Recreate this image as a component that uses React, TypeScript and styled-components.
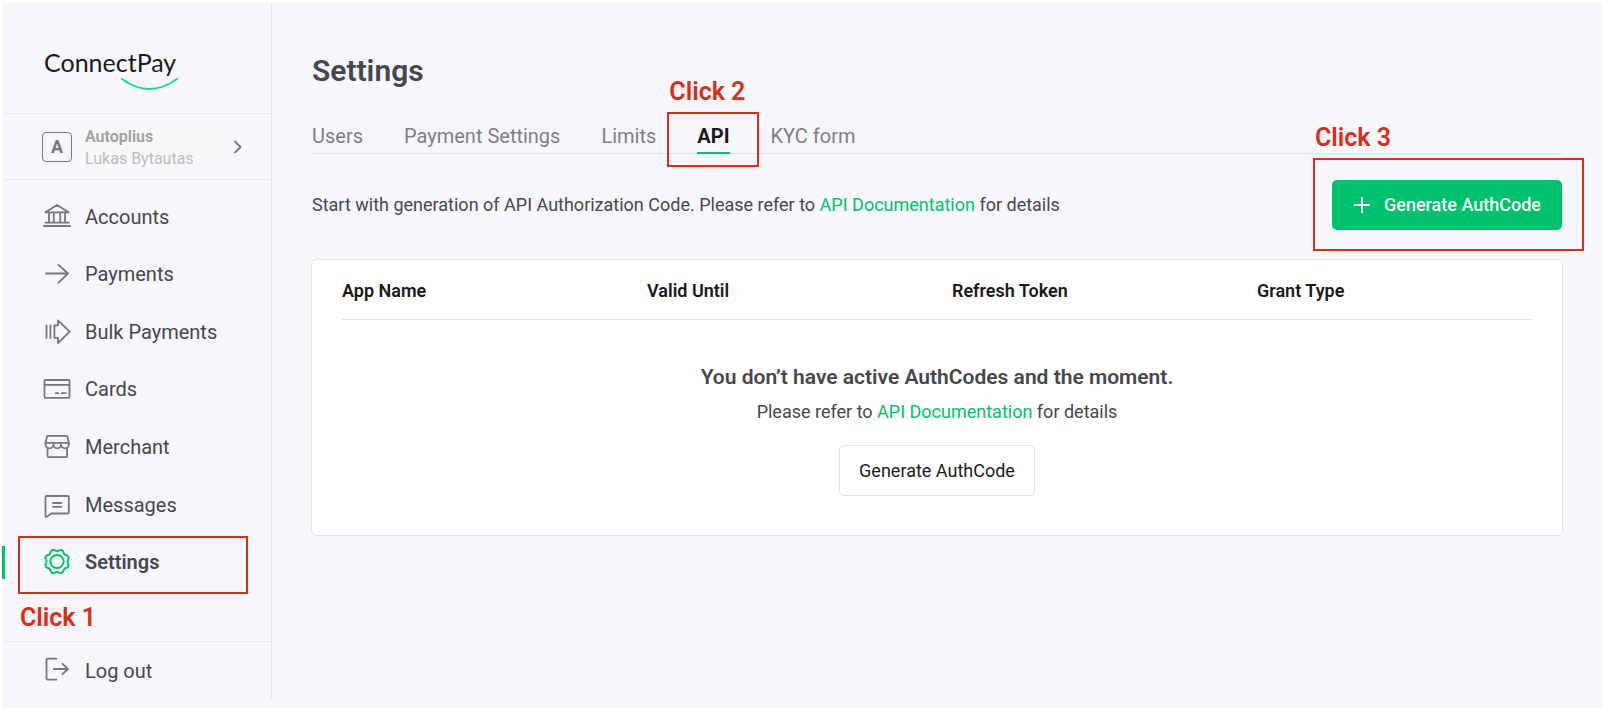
import React from "react";
import styled, { createGlobalStyle, css } from "styled-components";

const color = {
  page: "#f7f6fb",
  line: "#e4e3e8",
  softLine: "#ebeaef",
  text: "#47464c",
  strong: "#1a1a1c",
  muted: "#7f7e84",
  icon: "#77767b",
  green: "#00c16e",
  red: "#d92d1c",
};

const GlobalStyle = createGlobalStyle`
  *, *::before, *::after { box-sizing: border-box; }
  body {
    margin: 0;
    background: #fff;
    color: ${color.text};
    font-family: Roboto, "Liberation Sans", sans-serif;
    font-size: 18px;
    line-height: 24px;
  }
  h1, h2, p, ul { margin: 0; padding: 0; }
  ul { list-style: none; }
  a { color: inherit; text-decoration: none; }
  button { font: inherit; cursor: pointer; }
`;

const Page = styled.div`
  display: flex;
  min-height: 100vh;
  padding: 3px 0 0 2px;
  background: linear-gradient(${color.page}, ${color.page}) content-box;
`;

const Sidebar = styled.aside`
  display: flex;
  flex-direction: column;
  flex: none;
  width: 270px;
  margin-bottom: 9px;
  border-right: 1px solid ${color.line};
`;

const Brand = styled.a`
  display: block;
  height: 111px;
  padding: 42px 0 0 41px;
  border-bottom: 1px solid ${color.softLine};
  color: ${color.strong};
`;

const Account = styled.button`
  display: flex;
  align-items: center;
  height: 66px;
  padding: 0 0 0 40px;
  border: 0;
  border-bottom: 1px solid ${color.softLine};
  background: none;
  text-align: left;
  color: ${color.icon};
`;

const Avatar = styled.span`
  display: grid;
  place-items: center;
  width: 30px;
  height: 30px;
  border: 1px solid ${color.icon};
  border-radius: 4px;
  font-size: 18px;
  font-weight: 700;
`;

const AccountNames = styled.span`
  display: flex;
  flex-direction: column;
  width: 139px;
  margin: 0 12px 0 5px;
  padding: 2px 8px 0;
  background: #f7f7f8;
  font-size: 16px;
  line-height: 22px;
  color: #bcbcbf;
`;

const AccountTitle = styled.strong`
  font-weight: 600;
  color: #a09fa2;
`;

const Nav = styled.nav`
  display: flex;
  flex-direction: column;
  flex: 1;
`;

const NavList = styled.ul`
  display: flex;
  flex-direction: column;
  justify-content: space-between;
  flex: 1;
  padding: 8px 0 50px;
`;

const NavItem = styled.li<{ $active?: boolean }>`
  position: relative;
  ${(p) =>
    p.$active &&
    css`
      font-weight: 600;
      &::before {
        content: "";
        position: absolute;
        left: 0;
        top: 12px;
        width: 3px;
        height: 33px;
        background: ${color.green};
      }
    `}
`;

const NavLink = styled.a`
  display: flex;
  align-items: center;
  gap: 14px;
  height: 57px;
  padding-left: 41px;
  font-size: 20px;
`;

const LogoutBar = styled.div`
  border-top: 1px solid ${color.softLine};
`;

const Main = styled.main`
  flex: 1;
  min-width: 0;
  padding: 50px 39px 40px;
`;

const Title = styled.h1`
  padding-left: 1px;
  font-size: 30px;
  line-height: 36px;
  font-weight: 600;
`;

const Tabs = styled.nav`
  display: flex;
  gap: 41px;
  margin: 35px 1px 0;
  border-bottom: 1px solid ${color.line};
`;

const TabSlot = styled.div`
  position: relative;
`;

const Tab = styled.a<{ $active?: boolean }>`
  display: block;
  height: 30px;
  margin-bottom: -1px;
  border-bottom: 2px solid ${(p) => (p.$active ? color.green : "transparent")};
  font-size: 20px;
  line-height: 24px;
  color: ${(p) => (p.$active ? color.strong : color.muted)};
  font-weight: ${(p) => (p.$active ? 700 : 400)};
`;

const Intro = styled.div`
  display: flex;
  align-items: center;
  justify-content: space-between;
  margin: 26px 1px 0;
`;

const DocLink = styled.a`
  color: ${color.green};
`;

const ButtonSlot = styled.div`
  position: relative;
`;

const PrimaryButton = styled.button`
  display: flex;
  align-items: center;
  gap: 14px;
  height: 50px;
  padding: 0 21px 0 22px;
  border: 0;
  border-radius: 5px;
  background: ${color.green};
  color: #fff;
  font-weight: 500;
`;

const SecondaryButton = styled.button`
  height: 51px;
  padding: 0 19px;
  border: 1px solid ${color.line};
  border-radius: 5px;
  background: #fff;
  color: ${color.strong};
`;

const Card = styled.section`
  margin-top: 29px;
  padding: 0 30px 39px;
  border: 1px solid ${color.line};
  border-radius: 6px;
  background: #fff;
`;

const Table = styled.table`
  display: block;
  thead, tbody { display: block; }
`;

const HeadRow = styled.tr`
  display: grid;
  grid-template-columns: repeat(4, 1fr);
  gap: 30px;
  height: 60px;
  padding-top: 2px;
  align-items: center;
  border-bottom: 1px solid ${color.line};
`;

const HeadCell = styled.th`
  padding: 0;
  text-align: left;
  font-weight: 600;
  color: ${color.strong};
`;

const EmptyRow = styled.tr`
  display: block;
`;

const EmptyCell = styled.td`
  display: flex;
  flex-direction: column;
  align-items: center;
  padding: 45px 0 0;
`;

const EmptyTitle = styled.h2`
  font-size: 21px;
  line-height: 24px;
  font-weight: 600;
`;

const EmptyText = styled.p`
  margin: 11px 0 21px;
`;

const Highlight = styled.span<{ $inset: string }>`
  position: absolute;
  inset: ${(p) => p.$inset};
  border: 2px solid ${color.red};
  pointer-events: none;
`;

const Step = styled.span<{ $below?: boolean }>`
  position: absolute;
  left: 0;
  ${(p) => (p.$below ? "top: 100%;" : "bottom: 100%;")}
  padding: 11px 0 7px;
  font-size: 25px;
  line-height: 30px;
  font-weight: 600;
  white-space: nowrap;
  color: ${color.red};
`;

const IconSvg = styled.svg`
  flex: none;
  fill: none;
  stroke: ${color.icon};
  stroke-width: 1.8;
  stroke-linejoin: round;
  stroke-linecap: round;
`;

const GearSvg = styled(IconSvg)`
  stroke: ${color.green};
  stroke-width: 2;
`;

const Icon = ({ children }: { children: React.ReactNode }) => (
  <IconSvg width="28" height="28" viewBox="0 0 28 28" aria-hidden="true">
    {children}
  </IconSvg>
);

const gearPath = (() => {
  const points: string[] = [];
  for (let i = 0; i <= 160; i++) {
    const a = (i / 160) * Math.PI * 2;
    const r = 11.4 + 0.9 * Math.cos(8 * (a - Math.PI / 8));
    points.push(`${(14 + r * Math.cos(a)).toFixed(2)} ${(13.5 + r * Math.sin(a)).toFixed(2)}`);
  }
  return `M${points.join("L")}Z`;
})();

const icons = {
  accounts: (
    <Icon>
      <path d="M2.5 9.3 14 2l11.7 7.3ZM2.5 19.7h23.3M6 9.5v10M10.8 9.5v10M17.2 9.5v10M22 9.5v10M.9 23h26.2" />
    </Icon>
  ),
  payments: (
    <Icon>
      <path d="M3.2 13.5H25M15.5 4.8l9.5 8.7-9.5 9.2" />
    </Icon>
  ),
  bulk: (
    <Icon>
      <path d="M3.5 7.3v12.6M7.4 7.3v12.6M11.4 7.3H15v-5L26.6 13.7 15 25.2v-5.3h-3.6Z" />
    </Icon>
  ),
  cards: (
    <Icon>
      <rect x="1.5" y="5" width="25" height="17.8" rx="1" />
      <path d="M1.5 9.8h25M12.8 18.2h2.4M18.8 18.2h4" />
    </Icon>
  ),
  merchant: (
    <Icon>
      <path d="M5 2.8h18.4q.8 0 1 .8l1.5 6.200H2.4l1.6-6.200q.2-.8 1-.8ZM4.500 15.500v7.700q0 1 1 1h17.600q1 0 1-1v-7.700" />
      <path d="M2.5 9.8v1.6a3.9 3.9 0 0 0 7.8 0V9.8M10.3 11.4a3.9 3.9 0 0 0 7.8 0V9.8M18 11.4a3.9 3.9 0 0 0 7.8 0V9.8" />
    </Icon>
  ),
  messages: (
    <Icon>
      <path d="M3.5 5h21.3q1 0 1 1v15.5q0 1-1 1H8.2L4 25.6q-1.5.8-1.5-.6V6q0-1 1-1ZM10 12h8.2M10 15.8h8.2" />
    </Icon>
  ),
  settings: (
    <GearSvg width="28" height="28" viewBox="0 0 28 28" aria-hidden="true">
      <path d={gearPath} />
      <circle cx="14" cy="13.5" r="6.6" />
    </GearSvg>
  ),
  logout: (
    <Icon>
      <path d="M13.5 1.6h-9q-1 0-1 1v19q0 1 1 1h9M10.8 12h14.200M19.5 6.8 25 12l-5.5 5.2" />
    </Icon>
  ),
};

const navItems: { label: string; icon: React.ReactNode; active?: boolean }[] = [
  { label: "Accounts", icon: icons.accounts },
  { label: "Payments", icon: icons.payments },
  { label: "Bulk Payments", icon: icons.bulk },
  { label: "Cards", icon: icons.cards },
  { label: "Merchant", icon: icons.merchant },
  { label: "Messages", icon: icons.messages },
  { label: "Settings", icon: icons.settings, active: true },
];

const tabs = ["Users", "Payment Settings", "Limits", "API", "KYC form"];
const columns = ["App Name", "Valid Until", "Refresh Token", "Grant Type"];

const Logo = () => (
  <svg width="150" height="50" viewBox="0 0 150 50" role="img" aria-label="ConnectPay">
    <text x="1" y="27" fontFamily="Lato, sans-serif" fontSize="25" fill={color.strong}>
      ConnectPay
    </text>
    <path d="M79 34q27 20 55 0" fill="none" stroke="#17d98a" strokeWidth="2" strokeLinecap="round" />
  </svg>
);

export default function App() {
  return (
    <>
      <GlobalStyle />
      <Page>
        <Sidebar>
          <Brand href="#">
            <Logo />
          </Brand>
          <Account type="button">
            <Avatar>A</Avatar>
            <AccountNames>
              <AccountTitle>Autoplius</AccountTitle>
              <span>Lukas Bytautas</span>
            </AccountNames>
            <IconSvg width="20" height="20" viewBox="0 0 20 20" aria-hidden="true">
              <path d="m7 4.5 5.5 5.5L7 15.5" />
            </IconSvg>
          </Account>
          <Nav>
            <NavList>
              {navItems.map((item) => (
                <NavItem key={item.label} $active={item.active}>
                  <NavLink href="#" aria-current={item.active ? "page" : undefined}>
                    {item.icon}
                    {item.label}
                  </NavLink>
                  {item.active && (
                    <Highlight $inset="2px 23px -3px 16px">
                      <Step $below>Click 1</Step>
                    </Highlight>
                  )}
                </NavItem>
              ))}
            </NavList>
            <LogoutBar>
              <NavLink href="#">
                {icons.logout}
                Log out
              </NavLink>
            </LogoutBar>
          </Nav>
        </Sidebar>
        <Main>
          <Title>Settings</Title>
          <Tabs>
            {tabs.map((label) => (
              <TabSlot key={label}>
                <Tab href="#" $active={label === "API"}>
                  {label}
                </Tab>
                {label === "API" && (
                  <Highlight $inset="-12px -29px -14px -30px">
                    <Step>Click 2</Step>
                  </Highlight>
                )}
              </TabSlot>
            ))}
          </Tabs>
          <Intro>
            <p>
              Start with generation of API Authorization Code. Please refer to{" "}
              <DocLink href="#">API Documentation</DocLink> for details
            </p>
            <ButtonSlot>
              <PrimaryButton type="button">
                <svg width="16" height="16" viewBox="0 0 16 16" stroke="#fff" strokeWidth="2" aria-hidden="true">
                  <path d="M8 0v16M0 8h16" />
                </svg>
                Generate AuthCode
              </PrimaryButton>
              <Highlight $inset="-22px -22px -21px -19px">
                <Step>Click 3</Step>
              </Highlight>
            </ButtonSlot>
          </Intro>
          <Card>
            <Table>
              <thead>
                <HeadRow>
                  {columns.map((label) => (
                    <HeadCell key={label} scope="col">
                      {label}
                    </HeadCell>
                  ))}
                </HeadRow>
              </thead>
              <tbody>
                <EmptyRow>
                  <EmptyCell colSpan={4}>
                    <EmptyTitle>You don’t have active AuthCodes and the moment.</EmptyTitle>
                    <EmptyText>
                      Please refer to <DocLink href="#">API Documentation</DocLink> for details
                    </EmptyText>
                    <SecondaryButton type="button">Generate AuthCode</SecondaryButton>
                  </EmptyCell>
                </EmptyRow>
              </tbody>
            </Table>
          </Card>
        </Main>
      </Page>
    </>
  );
}
